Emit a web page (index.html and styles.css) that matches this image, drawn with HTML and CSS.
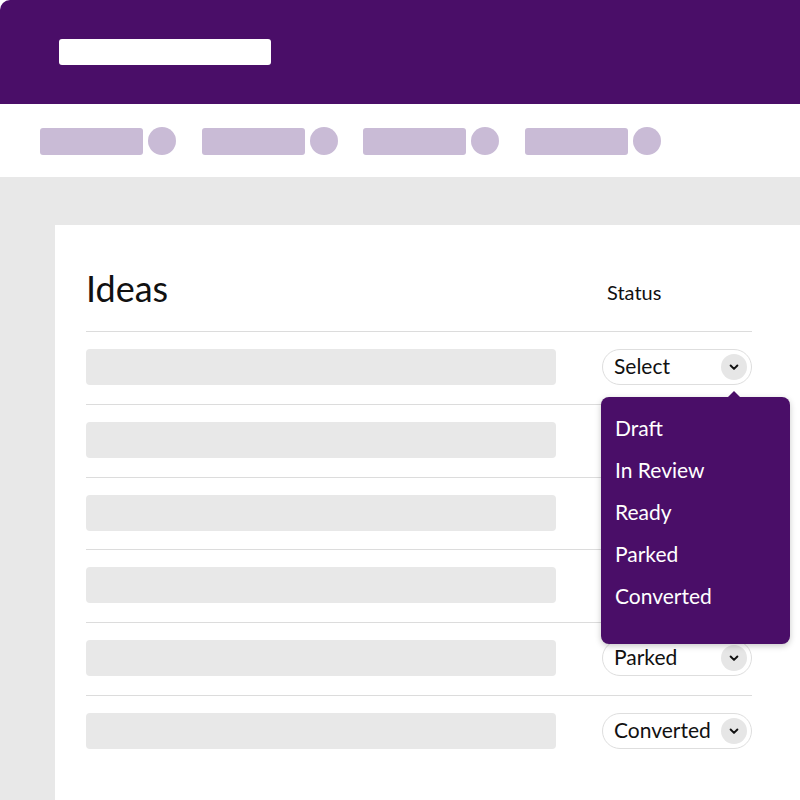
FILE: index.html
```html
<!DOCTYPE html>
<html>
<head>
<meta charset="utf-8">
<link rel="stylesheet" href="styles.css">
</head>
<body>
<header class="topbar">
  <div class="logo"></div>
</header>
<nav class="nav">
  <div class="nav-item"><span class="pill"></span><span class="dot"></span></div>
  <div class="nav-item"><span class="pill"></span><span class="dot"></span></div>
  <div class="nav-item"><span class="pill"></span><span class="dot"></span></div>
  <div class="nav-item"><span class="pill"></span><span class="dot"></span></div>
</nav>
<main class="main">
  <section class="card">
    <div class="card-head">
      <h1 class="title">Ideas</h1>
      <div class="status-col"><span class="status-label">Status</span></div>
    </div>
    <div class="row">
      <div class="bar"></div>
      <div class="status-col">
        <div class="select">
          <span class="select-text">Select</span>
          <span class="chev"><svg viewBox="0 0 16 16" width="12" height="12"><path d="M3.5 6l4.5 4.5 4.5-4.5" fill="none" stroke="#111" stroke-width="2.6" stroke-linecap="round" stroke-linejoin="round"/></svg></span>
        </div>
        <div class="menu">
          <div class="menu-item">Draft</div>
          <div class="menu-item">In Review</div>
          <div class="menu-item">Ready</div>
          <div class="menu-item">Parked</div>
          <div class="menu-item">Converted</div>
        </div>
      </div>
    </div>
    <div class="row">
      <div class="bar"></div>
      <div class="status-col"></div>
    </div>
    <div class="row">
      <div class="bar"></div>
      <div class="status-col"></div>
    </div>
    <div class="row">
      <div class="bar"></div>
      <div class="status-col"></div>
    </div>
    <div class="row">
      <div class="bar"></div>
      <div class="status-col">
        <div class="select">
          <span class="select-text">Parked</span>
          <span class="chev"><svg viewBox="0 0 16 16" width="12" height="12"><path d="M3.5 6l4.5 4.5 4.5-4.5" fill="none" stroke="#111" stroke-width="2.6" stroke-linecap="round" stroke-linejoin="round"/></svg></span>
        </div>
      </div>
    </div>
    <div class="row">
      <div class="bar"></div>
      <div class="status-col">
        <div class="select">
          <span class="select-text">Converted</span>
          <span class="chev"><svg viewBox="0 0 16 16" width="12" height="12"><path d="M3.5 6l4.5 4.5 4.5-4.5" fill="none" stroke="#111" stroke-width="2.6" stroke-linecap="round" stroke-linejoin="round"/></svg></span>
        </div>
      </div>
    </div>
  </section>
</main>
</body>
</html>
```
FILE: styles.css
```css
* { box-sizing: border-box; }
html, body { margin: 0; padding: 0; }
body {
  width: 800px;
  height: 800px;
  overflow: hidden;
  font-family: Lato, "Open Sans", sans-serif;
  color: #111;
  background: #fff;
}
.topbar {
  height: 104px;
  background: #4a0e68;
  border-top-left-radius: 10px;
  padding: 39px 0 0 59px;
}
.logo {
  width: 212px;
  height: 26px;
  background: #fff;
  border-radius: 3px;
}
.nav {
  height: 73px;
  display: flex;
  gap: 25.7px;
  padding: 23px 0 0 40px;
  background: #fff;
}
.nav-item {
  display: flex;
  gap: 5px;
  align-items: center;
  height: 28px;
}
.pill {
  width: 103px;
  height: 27px;
  border-radius: 3px;
  background: #c9bbd6;
}
.dot {
  width: 28px;
  height: 28px;
  border-radius: 50%;
  background: #c9bbd6;
}
.main {
  background: #e8e8e8;
  padding: 48px 0 0 55px;
  height: 623px;
}
.card {
  background: #fff;
  height: 575px;
  padding: 0 48px 0 31px;
}
.card-head {
  height: 106px;
  display: flex;
  align-items: flex-end;
  justify-content: space-between;
  padding-bottom: 23px;
}
.title {
  margin: 0;
  font-size: 36px;
  font-weight: 400;
  line-height: 40px;
  color: #111;
}
.status-label {
  display: block;
  font-size: 20px;
  line-height: 24px;
  padding: 0 0 4px 5px;
}
.status-col {
  width: 150px;
  position: relative;
}
.row {
  display: flex;
  justify-content: space-between;
  border-top: 1px solid #dcdcdc;
  padding: 17px 0 18.8px;
}
.bar {
  width: 470px;
  height: 36px;
  background: #e8e8e8;
  border-radius: 4px;
}
.select {
  height: 36px;
  width: 150px;
  border: 1px solid #dedede;
  border-radius: 18px;
  display: flex;
  align-items: center;
  justify-content: space-between;
  padding: 0 4px 0 11px;
  background: #fff;
}
.select-text {
  font-size: 21px;
  line-height: 24px;
  position: relative;
  top: -1px;
}
.chev {
  width: 26px;
  height: 26px;
  border-radius: 50%;
  background: #e6e6e6;
  display: flex;
  align-items: center;
  justify-content: center;
}
.menu {
  position: absolute;
  left: -1px;
  top: 48px;
  width: 189px;
  height: 247px;
  background: #4a0e68;
  border-radius: 8px;
  padding: 10px 0 0 14px;
  box-shadow: 0 2px 6px rgba(0,0,0,0.22);
  z-index: 5;
}
.menu::before {
  content: "";
  position: absolute;
  left: 126px;
  top: -6px;
  border-left: 7px solid transparent;
  border-right: 7px solid transparent;
  border-bottom: 7px solid #4a0e68;
}
.menu-item {
  color: #fff;
  font-size: 21px;
  line-height: 42px;
}
```
